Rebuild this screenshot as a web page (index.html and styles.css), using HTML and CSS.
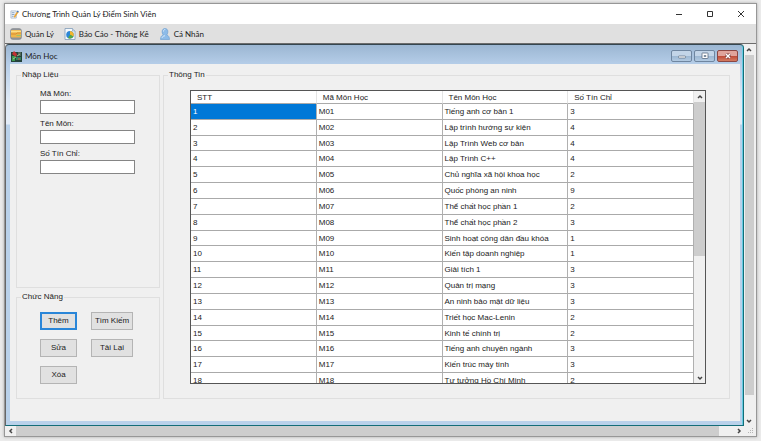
FILE: index.html
```
<!DOCTYPE html>
<html lang="vi">
<head>
<meta charset="utf-8">
<title>Chương Trình Quản Lý Điểm Sinh Viên</title>
<link rel="stylesheet" href="styles.css">
</head>
<body>
<div class="app">
  <header class="titlebar">
    <svg class="app-icon" viewBox="0 0 10 10"><path d="M1 1h6v8H1z" fill="#eef3f8" stroke="#93a8bd" stroke-width=".7"/><path d="M2 3h3M2 5h3M2 7h2" stroke="#6489b5" stroke-width=".8"/><path d="M4 7.500 8 1.500l1.500 1L5.500 8.500z" fill="#e9a63a"/><path d="m7.500 2 1-1.500 1.300 1L9 3z" fill="#3b72bd"/></svg>
    <h1>Chương Trình Quản Lý Điểm Sinh Viên</h1>
    <div class="caption-buttons">
      <button type="button" aria-label="Minimize"><svg viewBox="0 0 8 8"><path d="M1 4.500h6" /></svg></button>
      <button type="button" aria-label="Maximize"><svg viewBox="0 0 8 8"><path d="M1.500 1.500h5v5h-5z" /></svg></button>
      <button type="button" aria-label="Close"><svg viewBox="0 0 8 8"><path d="m1 1 6 6M7 1 1 7" /></svg></button>
    </div>
  </header>
  <nav class="toolbar">
    <button type="button"><svg viewBox="0 0 12 12"><rect x=".5" y=".5" width="11" height="11" rx="2.500" fill="#8e9298" stroke="#85898e" stroke-width=".6"/><rect x="1" y="2" width="10" height="7.500" rx="1" fill="#efb64a"/><path d="M1 3.500h10" stroke="#fbe08a" stroke-width="1.600"/><path d="M1 6h5l1-1h4" stroke="#d98d30" fill="none"/><path d="M6.500 7.500H11" stroke="#9fc267" stroke-width="1.200"/></svg>Quản Lý</button>
    <button type="button"><svg viewBox="0 0 12 12"><path d="M1 .5h7.500L11 3v8.500H1z" fill="#f5f9fd" stroke="#7f9bb8" stroke-width=".8"/><path d="M8.500.5V3H11" fill="#cbdced" stroke="#7f9bb8" stroke-width=".6"/><circle cx="6" cy="6.700" r="3.800" fill="#2d86d6"/><path d="M6 6.700V2.900a3.800 3.800 0 0 1 3.300 5.600z" fill="#f4b52c"/><path d="m6 6.700 3.300 1.800A3.800 3.800 0 0 1 4 9.900z" fill="#59a93c"/></svg>Báo Cáo - Thống Kê</button>
    <button type="button"><svg viewBox="0 0 12 12"><path d="M1.500 11.500c0-2.500 1-4 2.800-4.600C2.500 5 2.600.5 6 .5s3.500 4.500 1.700 6.400c1.800.6 2.800 2.100 2.800 4.600z" fill="#8dbbe8" stroke="#659bd0" stroke-width=".6"/><path d="M4.500 3.500C4.500 2 5.300 1.400 6.300 1.400M3 10c.2-1.400 1.300-2.200 3-2.200" stroke="#d7eafb" fill="none"/></svg>Cá Nhân</button>
  </nav>
  <div class="workspace">
    <section class="child">
      <header class="child-title">
        <svg class="child-icon" viewBox="0 0 11 11"><path d="M0 1h11v10H0z" fill="#24433a"/><path d="M1 5h3v5H1z" fill="#3d9a4e"/><path d="M5 6h5v3H5z" fill="#31825f"/><path d="M7 1h3v4H7z" fill="#52685a"/><path d="m3 0 3 3-1 3-4-3z" fill="#c33130"/><path d="m6 5 3-2M2 8l3-2" stroke="#b7d49b" stroke-width=".8"/><path d="M8 7v2" stroke="#d14c43"/></svg>
        <h2>Môn Học</h2>
        <div class="glass-buttons">
          <button type="button" aria-label="Minimize"><svg viewBox="0 0 12 8"><rect x="2.500" y="4" width="7" height="2" rx=".5" fill="#fff" stroke="#596b80" stroke-width=".7"/></svg></button>
          <button type="button" aria-label="Restore"><svg viewBox="0 0 12 8"><rect x="3" y="1" width="6" height="5.500" rx=".5" fill="#fff" stroke="#596b80" stroke-width=".8"/><path d="M5 3.500h2v1H5z" fill="#8ca4bd" stroke="#596b80" stroke-width=".6"/></svg></button>
          <button type="button" class="close" aria-label="Close"><svg viewBox="0 0 12 8"><path d="m4 2 4 4m0-4L4 6" stroke="#743535" stroke-width="2.800"/><path d="m4 2 4 4m0-4L4 6" stroke="#fff" stroke-width="1.500"/></svg></button>
        </div>
      </header>
      <main class="client">
        <div class="side">
          <fieldset class="entry">
            <legend>Nhập Liệu</legend>
            <label for="code">Mã Môn:</label><input id="code" type="text">
            <label for="name">Tên Môn:</label><input id="name" type="text">
            <label for="credits">Số Tín Chỉ:</label><input id="credits" type="text">
          </fieldset>
          <fieldset class="actions">
            <legend>Chức Năng</legend>
            <div class="action-grid">
              <button type="button" class="primary">Thêm</button><button type="button">Tìm Kiếm</button>
              <button type="button">Sửa</button><button type="button">Tải Lại</button>
              <button type="button">Xóa</button>
            </div>
          </fieldset>
        </div>
        <fieldset class="info">
          <legend>Thông Tin</legend>
          <div class="grid">
            <div class="grid-view">
              <table>
                <thead><tr><th>STT</th><th>Mã Môn Học</th><th>Tên Môn Học</th><th>Số Tín Chỉ</th></tr></thead>
                <tbody>
                  <tr><td class="selected">1</td><td>M01</td><td>Tiếng anh cơ bản 1</td><td>3</td></tr>
                  <tr><td>2</td><td>M02</td><td>Lập trình hướng sự kiện</td><td>4</td></tr>
                  <tr><td>3</td><td>M03</td><td>Lập Trình Web cơ bản</td><td>4</td></tr>
                  <tr><td>4</td><td>M04</td><td>Lập Trình C++</td><td>4</td></tr>
                  <tr><td>5</td><td>M05</td><td>Chủ nghĩa xã hội khoa học</td><td>2</td></tr>
                  <tr><td>6</td><td>M06</td><td>Quốc phòng an ninh</td><td>9</td></tr>
                  <tr><td>7</td><td>M07</td><td>Thể chất học phần 1</td><td>2</td></tr>
                  <tr><td>8</td><td>M08</td><td>Thể chất học phần 2</td><td>3</td></tr>
                  <tr><td>9</td><td>M09</td><td>Sinh hoạt công dân đầu khóa</td><td>1</td></tr>
                  <tr><td>10</td><td>M10</td><td>Kiến tập doanh nghiệp</td><td>1</td></tr>
                  <tr><td>11</td><td>M11</td><td>Giải tích 1</td><td>3</td></tr>
                  <tr><td>12</td><td>M12</td><td>Quản trị mạng</td><td>3</td></tr>
                  <tr><td>13</td><td>M13</td><td>An ninh bảo mật dữ liệu</td><td>3</td></tr>
                  <tr><td>14</td><td>M14</td><td>Triết học Mac-Lenin</td><td>2</td></tr>
                  <tr><td>15</td><td>M15</td><td>Kinh tế chính trị</td><td>2</td></tr>
                  <tr><td>16</td><td>M16</td><td>Tiếng anh chuyên ngành</td><td>3</td></tr>
                  <tr><td>17</td><td>M17</td><td>Kiến trúc máy tính</td><td>3</td></tr>
                  <tr><td>18</td><td>M18</td><td>Tư tưởng Hồ Chí Minh</td><td>2</td></tr>
                </tbody>
              </table>
            </div>
            <div class="scroll vertical grid-scroll">
              <button type="button" aria-label="Scroll up"><svg viewBox="0 0 8 8"><path d="m2 5 2-2 2 2"/></svg></button>
              <div class="track"><div class="thumb"></div></div>
              <button type="button" aria-label="Scroll down"><svg viewBox="0 0 8 8"><path d="m2 3 2 2 2-2"/></svg></button>
            </div>
          </div>
        </fieldset>
      </main>
    </section>
    <div class="scroll vertical page-scroll">
      <button type="button" aria-label="Scroll up"><svg viewBox="0 0 8 8"><path d="m2 5 2-2 2 2"/></svg></button>
      <div class="track"><div class="thumb"></div></div>
      <button type="button" aria-label="Scroll down"><svg viewBox="0 0 8 8"><path d="m2 3 2 2 2-2"/></svg></button>
    </div>
    <div class="scroll horizontal">
      <button type="button" aria-label="Scroll left"><svg viewBox="0 0 8 8"><path d="M5 2 3 4l2 2"/></svg></button>
      <div class="track"><div class="thumb"></div></div>
      <button type="button" aria-label="Scroll right"><svg viewBox="0 0 8 8"><path d="m3 2 2 2-2 2"/></svg></button>
    </div>
    <svg class="grip" viewBox="0 0 10 10"><path d="M8 2h1v1H8zM6 4h1v1H6zM8 4h1v1H8zM4 6h1v1H4zM6 6h1v1H6zM8 6h1v1H8z" fill="#b5b5b5"/></svg>
  </div>
</div>
</body>
</html>
```
FILE: styles.css
```
* { box-sizing: border-box; }
html, body { height: 100%; }
body {
  margin: 0;
  padding: 3px 4px 4px;
  background: #ebebeb;
  color: #222;
  font: 8px/10px Lato, "Noto Sans", sans-serif;
  overflow: hidden;
}
button, input { font: inherit; color: inherit; margin: 0; padding: 0; }
svg { display: block; fill: none; }
h1, h2 { margin: 0; font-size: 8px; font-weight: 400; }

.app {
  height: 100%;
  display: flex;
  flex-direction: column;
  border: 1px solid #979797;
  background: #f0f0f0;
  box-shadow: 0 0 3px #aaa;
}
.titlebar {
  height: 20px;
  flex: none;
  display: flex;
  align-items: center;
  gap: 3px;
  padding-left: 5px;
  background: #fff;
}
.app-icon { width: 9px; height: 9px; }
.caption-buttons { display: flex; margin-left: auto; }
.caption-buttons button {
  width: 31px;
  height: 19px;
  display: grid;
  place-items: center;
  border: 0;
  background: none;
}
.caption-buttons svg { width: 8px; height: 8px; stroke: #333; stroke-width: 1; }

.toolbar {
  height: 19px;
  flex: none;
  display: flex;
  align-items: center;
  gap: 10px;
  padding-left: 5px;
  background: #e0e0e0;
}
.toolbar button {
  display: flex;
  align-items: center;
  gap: 3px;
  border: 0;
  background: none;
}
.toolbar svg { width: 12px; height: 12px; }

.workspace {
  flex: 1;
  min-height: 0;
  display: grid;
  grid-template: minmax(0, 1fr) 10px / minmax(0, 1fr) 12px;
  border-top: 1px solid #6c6c6c;
}
.child {
  display: flex;
  flex-direction: column;
  min-width: 0;
  padding: 0 3px 4px 4px;
  border: 1px solid #35464f;
  border-left: 1px solid #666;
  border-right-color: #146d78;
  border-bottom-color: #146d78;
  border-radius: 4px 4px 0 0;
  background: linear-gradient(#9bb6d2, #b5cde8 19px, #dfeaf6 55px, #e4edf8 79px, #b9d1ea 80px);
  box-shadow: inset -1px 0 #64cbe3;
}
.child-title { height: 19px; flex: none; display: flex; align-items: center; gap: 3px; padding: 3px 2px 0 1px; }
.child-icon { width: 11px; height: 11px; }
.glass-buttons { display: flex; gap: 2px; margin-left: auto; }
.glass-buttons button {
  width: 21px;
  height: 12px;
  display: grid;
  place-items: center;
  border: 1px solid #6f86a0;
  border-radius: 2px;
  background: linear-gradient(#c3d5e8 45%, #9cb7d2 50%, #b2cae2);
}
.glass-buttons .close { border-color: #8b4743; background: linear-gradient(#e0a49b 45%, #bd4936 50%, #d47b61); }
.glass-buttons svg { width: 12px; height: 8px; }

.client {
  flex: 1;
  min-height: 0;
  display: flex;
  gap: 3px;
  padding: 6px 10px 22px 6px;
  background: #f0f0f0;
  font-family: "Liberation Sans", sans-serif;
}
.side { width: 144px; flex: none; display: flex; flex-direction: column; gap: 4px; }
fieldset { min-width: 0; margin: 0; border: 1px solid #dfdfdf; }
legend { padding: 0 1px; line-height: 10px; }
.entry { flex: 1; display: flex; flex-direction: column; padding: 8px 24px 0 23px; }
.entry legend, .actions legend { margin-left: -19px; }
.entry label { line-height: 12px; }
.entry input {
  height: 14px;
  width: 95px;
  margin-bottom: 4px;
  padding: 0 2px;
  border: 1px solid #858585;
  border-radius: 0;
  background: #fff;
}
.actions { height: 107px; padding: 10px 23px 0; }
.action-grid {
  display: grid;
  grid-template-columns: 37px 42px;
  grid-auto-rows: 18px;
  gap: 9px 14px;
}
.action-grid button { border: 1px solid #b4b4b4; border-radius: 0; background: #e1e1e1; white-space: nowrap; }
.action-grid .primary { border: 2px solid #2a86d8; }

.info { flex: 1; display: flex; padding: 10px 23px 14px 26px; }
.info legend { margin-left: -22px; }
.grid { height: 100%; display: flex; border: 1px solid #555; background: #fff; }
.grid-view { flex: 1; min-width: 0; overflow: hidden; }
table { width: 100%; height: 298px; table-layout: fixed; border-collapse: separate; border-spacing: 0; }
th, td {
  padding: 1px 2px 0;
  border-right: 1px solid #b0b0b0;
  border-bottom: 1px solid #aaa;
  text-align: left;
  font-weight: 400;
  white-space: nowrap;
}
th { height: 13px; padding-left: 6px; border-right-color: #e4e4e4; }
.selected { background: #0078d7; color: #fff; }

.scroll { display: flex; background: #f0f0f0; }
.scroll.vertical { flex-direction: column; }
.scroll button { flex: none; display: grid; place-items: center; border: 0; background: none; }
.vertical button { height: 11px; }
.horizontal button { width: 11px; }
.scroll svg { width: 8px; height: 8px; stroke: #444; stroke-width: 1.5; }
.track { flex: 1; min-height: 0; }
.thumb { background: #cdcdcd; }
.grid-scroll { width: 11px; }
.grid-scroll .thumb { height: 57%; }
.page-scroll { padding: 0 2px 0 0; }
.page-scroll .thumb { height: 95%; margin-left: 1px; }
.page-scroll .track { margin-bottom: 2px; }
.horizontal .thumb { width: 98%; height: 100%; }
.grip { width: 10px; height: 10px; }
```
